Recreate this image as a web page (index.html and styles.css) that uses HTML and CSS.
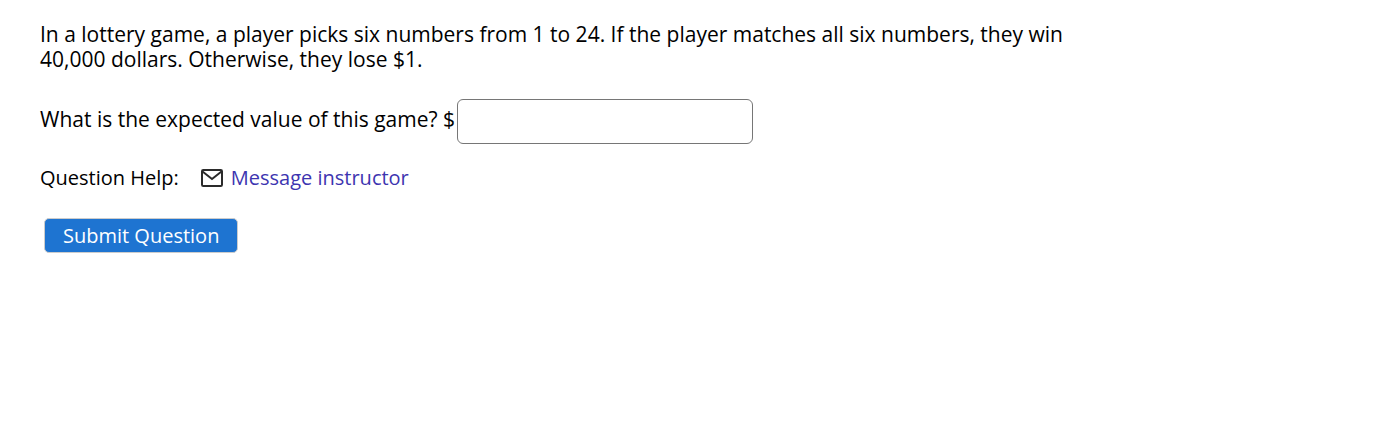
FILE: index.html
```html
<!DOCTYPE html>
<html lang="en">
<head>
<meta charset="utf-8">
<title>Question</title>
<link rel="stylesheet" href="styles.css">
</head>
<body>
<main class="question">
  <p class="prompt">In a lottery game, a player picks six numbers from 1 to 24. If the player matches all six numbers, they win 40,000 dollars. Otherwise, they lose $1.</p>
  <div class="answer">
    <label class="answer-label" for="answer">What is the expected value of this game? $</label>
    <input class="answer-box" id="answer" type="text">
  </div>
  <div class="help">
    <span>Question Help:</span>
    <a class="message" href="#message"><svg class="mail" viewBox="0 0 22 18" aria-hidden="true"><rect x="1" y="1" width="20" height="16" rx="1.2"/><path d="M1.5 2.5L11 10l9.500-7.500"/></svg>Message instructor</a>
  </div>
  <button class="submit" type="button">Submit Question</button>
</main>
</body>
</html>
```

FILE: styles.css
```css
body {
  margin: 0;
  background: #fff;
  color: #000;
  font: 21px/25px "Trebuchet MS", "Open Sans", sans-serif;
}

.question {
  max-width: 1050px;
  padding: 22px 40px;
}

.prompt {
  margin: 0;
}

.answer {
  display: flex;
  align-items: center;
  margin-top: 27px;
}

.answer-label {
  padding: 0 2px 4px 0;
}

.answer-box {
  box-sizing: border-box;
  width: 296px;
  height: 45px;
  padding: 4px 8px;
  border: 1px solid #767676;
  border-radius: 6px;
  font: inherit;
}

.help {
  display: flex;
  gap: 22px;
  margin-top: 21px;
  font-size: 20px;
}

.message {
  display: flex;
  align-items: center;
  gap: 8px;
  color: #3d35b0;
  text-decoration: none;
}

.mail {
  width: 22px;
  height: 18px;
  fill: none;
  stroke: #2b2b2b;
  stroke-width: 2;
}

.submit {
  display: block;
  margin: 28px 0 0 4px;
  padding: 4px 18px;
  border: 1px solid #ccc;
  border-radius: 5px;
  background: #1e74d1;
  color: #fff;
  font: inherit;
  font-size: 20px;
}
```
